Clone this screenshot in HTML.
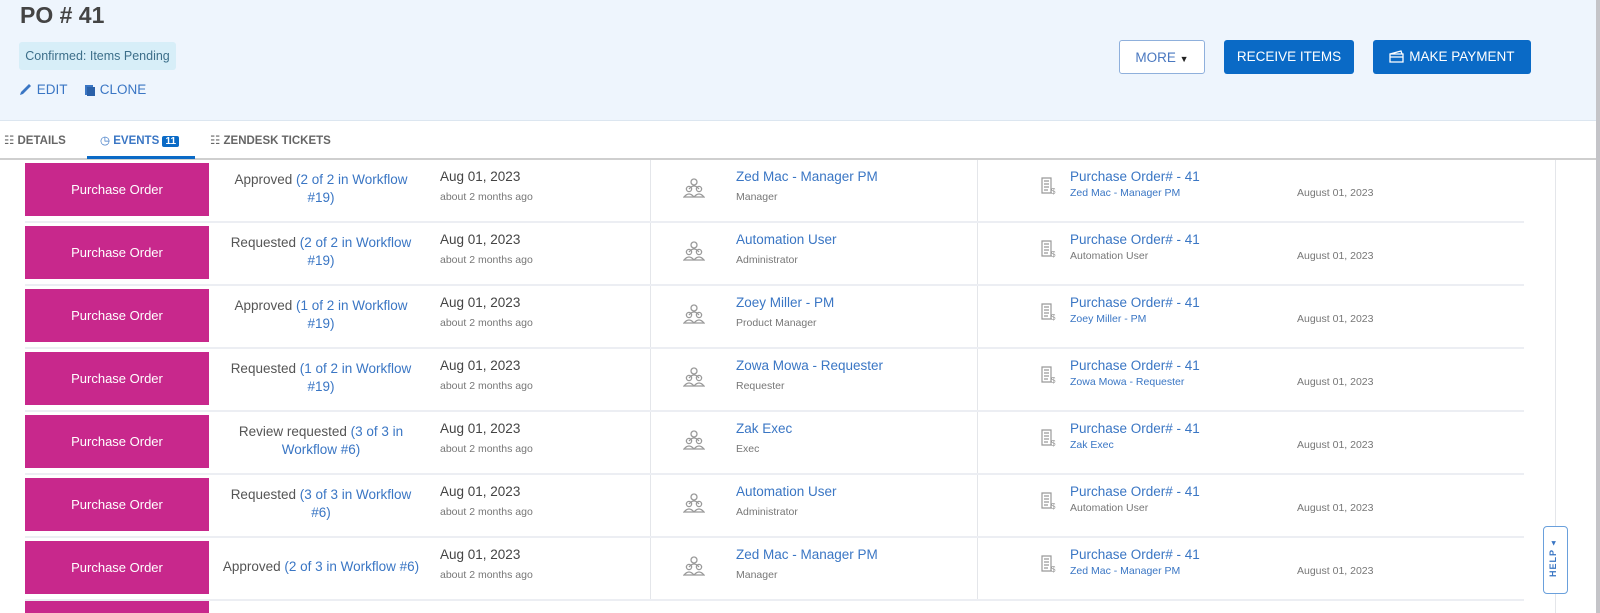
<!DOCTYPE html>
<html><head><meta charset="utf-8"><style>
*{box-sizing:border-box;margin:0;padding:0}
html,body{width:1600px;height:613px;overflow:hidden}
body{background:#fff;font-family:"Liberation Sans","DejaVu Sans",sans-serif;position:relative;color:#555}
.hdr{position:absolute;left:0;top:0;width:1596px;height:121px;background:#eef5fd;border-bottom:1px solid #dce6f0}
.title{position:absolute;left:20px;top:2px;font-size:23px;font-weight:bold;color:#444}
.badge{position:absolute;left:19px;top:42px;width:157px;height:28px;background:#d7eef8;border-radius:3px;font-size:12.5px;color:#3d6f8a;line-height:28px;text-align:center}
.act{position:absolute;top:82px;font-size:13.5px;color:#3a76c4}
.btn{position:absolute;top:40px;height:34px;border-radius:3px;font-size:13.5px;line-height:34px;text-align:center}
.tabs{position:absolute;left:0;top:121px;width:1596px;height:39px;border-bottom:2px solid #cfcfcf;font-size:11.5px;font-weight:bold;color:#666}
.tab{position:absolute;top:12px}
.scroll{position:absolute;right:0;top:0;width:4px;height:613px;background:#c4c4c8}
.row{position:absolute;left:25px;width:1499px;height:63px;border-bottom:2px solid #eceef3}
.po{position:absolute;left:0;top:3px;width:184px;height:53px;background:#c8288c;color:#fff;font-size:13px;text-align:center;line-height:53px}
.st{position:absolute;left:186px;width:220px;top:11px;font-size:13.5px;text-align:center;line-height:18px;color:#555;white-space:nowrap}
.st a{color:#3a76c4}
.dt{position:absolute;left:415px;top:9px;font-size:13.5px;color:#444}
.ago{position:absolute;left:415px;top:31px;font-size:10.5px;color:#777}
.sep{position:absolute;top:0;width:1px;height:61px;background:#e4e6ea}
.nm{position:absolute;left:711px;top:9px;font-size:13.5px;color:#3a76c4}
.role{position:absolute;left:711px;top:31px;font-size:10.5px;color:#777}
.pt{position:absolute;left:1045px;top:9px;font-size:13.5px;color:#3a76c4}
.ps{position:absolute;left:1045px;top:27px;font-size:10.5px}
.pd{position:absolute;left:1272px;top:27px;font-size:10.5px;color:#777}
.ic{position:absolute;left:658px;top:18px}
.di{position:absolute;left:1016px;top:17px}
</style></head><body>
<div class="hdr">
<div class="title">PO # 41</div>
<div class="badge">Confirmed: Items Pending</div>
<div class="act" style="left:19px"><svg width="14" height="13" viewBox="0 0 14 13" style="vertical-align:-2px"><path d="M1 12 L2 9 L10 1 L12 3 L4 11 Z" fill="#3a76c4"/></svg> EDIT</div>
<div class="act" style="left:85px"><svg width="11" height="12" viewBox="0 0 11 12" style="vertical-align:-2px"><rect x="0" y="1" width="8" height="10" fill="#3a76c4"/><rect x="2" y="3" width="8" height="9" fill="#2a60a8"/></svg> CLONE</div>
<div class="btn" style="left:1119px;width:86px;border:1px solid #8fb0dc;background:#fff;color:#4a78c0">MORE <span style="font-size:9px;color:#222">▼</span></div>
<div class="btn" style="left:1224px;width:130px;background:#0a6ac6;color:#fff">RECEIVE ITEMS</div>
<div class="btn" style="left:1373px;width:158px;background:#0a6ac6;color:#fff"><svg width="16" height="13" viewBox="0 0 16 13" style="vertical-align:-2px"><path d="M1 4 L12 1 L13 4 M1 4 H14 V12 H1 Z M1 7 H14" fill="none" stroke="#fff" stroke-width="1.3"/></svg> MAKE PAYMENT</div>
</div>
<div class="tabs">
<div class="tab" style="left:4px">☷ DETAILS</div>
<div class="tab" style="left:100px;color:#3a76c4">◷ EVENTS <span style="background:#0a6ac6;color:#fff;padding:0 3px;border-radius:2px;font-size:10px">11</span></div>
<div style="position:absolute;left:87px;top:35px;width:108px;height:3px;background:#0a6ac6"></div>
<div class="tab" style="left:210px">☷ ZENDESK TICKETS</div>
</div>
<div style="position:absolute;left:1555px;top:160px;width:1px;height:453px;background:#e4e6ea"></div>
<div id="rows"></div>
<div style="position:absolute;left:1543px;top:526px;width:25px;height:68px;border:1px solid #6aa0dc;border-radius:4px;background:#fff"><div style="position:absolute;left:4px;top:50px;transform:rotate(-90deg);transform-origin:0 0;font-size:9px;color:#3a76c4;font-weight:bold;white-space:nowrap;letter-spacing:1px">HELP ◂</div></div>
<div class="scroll"></div>
<script>
var d=[["Approved","(2 of 2 in Workflow<br>#19)","Zed Mac - Manager PM","Manager"],
["Requested","(2 of 2 in Workflow<br>#19)","Automation User","Administrator"],
["Approved","(1 of 2 in Workflow<br>#19)","Zoey Miller - PM","Product Manager"],
["Requested","(1 of 2 in Workflow<br>#19)","Zowa Mowa - Requester","Requester"],
["Review requested","(3 of 3 in<br>Workflow #6)","Zak Exec","Exec"],
["Requested","(3 of 3 in Workflow<br>#6)","Automation User","Administrator"],
["Approved","(2 of 3 in Workflow #6)","Zed Mac - Manager PM","Manager"]];
var h="";
var person='<svg width="22" height="20" viewBox="0 0 22 20" fill="none" stroke="#999" stroke-width="1.3"><circle cx="11" cy="4" r="3"/><path d="M6 11 Q11 5 16 11"/><circle cx="6" cy="11" r="2.6"/><circle cx="16" cy="11" r="2.6"/><path d="M1 19 Q6 13 11 19 Z M11 19 Q16 13 21 19 Z"/></svg>';
var doc='<svg width="16" height="18" viewBox="0 0 16 18" fill="none" stroke="#999" stroke-width="1.2"><path d="M1 1 H10 V16 H1 Z M3 4 H8 M3 7 H8 M3 10 H8 M3 13 H7"/><text x="10" y="17" font-size="8" fill="#999" stroke="none">$</text></svg>';
d.forEach(function(r,i){var t=160+i*63;
var user=r[2];
var st=(i==6)?'<div class="st" style="top:20px">':'<div class="st">';
h+='<div class="row" style="top:'+t+'px"><div class="po">Purchase Order</div>'+st+r[0]+' <a>'+r[1]+'</a></div><div class="dt">Aug 01, 2023</div><div class="ago">about 2 months ago</div><div class="sep" style="left:625px"></div><div class="sep" style="left:952px"></div><div class="ic">'+person+'</div><div class="nm">'+user+'</div><div class="role">'+r[3]+'</div><div class="di">'+doc+'</div><div class="pt">Purchase Order# - 41</div><div class="ps" style="color:'+(user=="Automation User"?"#777":"#3a76c4")+'">'+user+'</div><div class="pd">August 01, 2023</div></div>';});
h+='<div style="position:absolute;left:25px;top:601px;width:184px;height:12px;background:#c8288c"></div>';
document.getElementById("rows").innerHTML=h;
</script>
</body></html>
